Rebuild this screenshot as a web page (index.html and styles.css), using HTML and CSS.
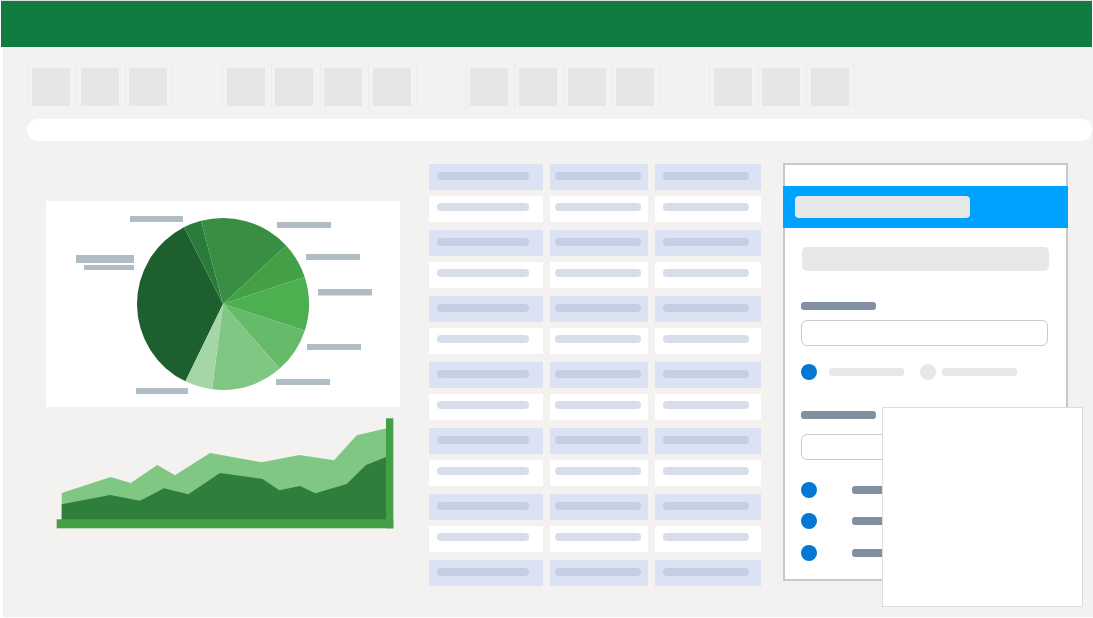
FILE: index.html
```html
<!DOCTYPE html>
<html>
<head>
<meta charset="utf-8">
<link rel="stylesheet" href="styles.css">
</head>
<body>
<header class="titlebar"></header>
<main class="workspace">
  <div class="toolbar">
    <div class="tool-group">
      <div class="tool"><span class="tool-icon"></span></div>
      <div class="tool"><span class="tool-icon"></span></div>
      <div class="tool"><span class="tool-icon"></span></div>
    </div>
    <div class="tool-group">
      <div class="tool"><span class="tool-icon"></span></div>
      <div class="tool"><span class="tool-icon"></span></div>
      <div class="tool"><span class="tool-icon"></span></div>
      <div class="tool"><span class="tool-icon"></span></div>
    </div>
    <div class="tool-group">
      <div class="tool"><span class="tool-icon"></span></div>
      <div class="tool"><span class="tool-icon"></span></div>
      <div class="tool"><span class="tool-icon"></span></div>
      <div class="tool"><span class="tool-icon"></span></div>
    </div>
    <div class="tool-group">
      <div class="tool"><span class="tool-icon"></span></div>
      <div class="tool"><span class="tool-icon"></span></div>
      <div class="tool"><span class="tool-icon"></span></div>
    </div>
  </div>
  <div class="searchbar"></div>
  <div class="content">
    <div class="charts">
      <div class="pie-card">
        <svg class="pie-svg" viewBox="46 201 354 206" width="354" height="206">
          <path d="M223 304 L185.44 381.37 A86 86 0 0 1 183.96 227.37 Z" fill="#1e5f2f"/>
          <path d="M223 304 L183.96 227.37 A86 86 0 0 1 201.03 220.86 Z" fill="#2b7b3b"/>
          <path d="M223 304 L201.03 220.86 A86 86 0 0 1 286.10 245.57 Z" fill="#388e43"/>
          <path d="M223 304 L286.10 245.57 A86 86 0 0 1 304.65 277.00 Z" fill="#43a047"/>
          <path d="M223 304 L304.65 277.00 A86 86 0 0 1 304.84 330.44 Z" fill="#4caf50"/>
          <path d="M223 304 L304.84 330.44 A86 86 0 0 1 279.76 368.61 Z" fill="#66bb6a"/>
          <path d="M223 304 L279.76 368.61 A86 86 0 0 1 212.07 389.30 Z" fill="#81c784"/>
          <path d="M223 304 L212.07 389.30 A86 86 0 0 1 185.44 381.37 Z" fill="#a5d6a7"/>
          <g fill="#b0bdc4">
            <rect x="130" y="216" width="53" height="6"/>
            <rect x="76" y="255" width="58" height="8"/>
            <rect x="84" y="265" width="50" height="5"/>
            <rect x="277" y="222" width="54" height="6"/>
            <rect x="306" y="254" width="54" height="6"/>
            <rect x="318" y="289" width="54" height="6.5"/>
            <rect x="307" y="344" width="54" height="6"/>
            <rect x="276" y="379" width="54" height="6"/>
            <rect x="136" y="388" width="52" height="6"/>
          </g>
        </svg>
      </div>
      <svg class="area-chart" viewBox="46 415 354 115" width="354" height="115">
        <polygon fill="#81c784" points="61.7,493 110.7,477 130.7,483 157.3,465 175,475.3 210,453 261.7,462.3 299.3,455 334,460.3 356.7,435.3 386.7,428.3 386.7,520 61.7,520"/>
        <polygon fill="#2f7e3c" points="61.7,504.3 110,495 140,500.7 164,488.3 188.3,494.3 220,473 262.7,479 279.3,490.3 300,486 315.3,493.3 346.7,484 366,465 386.7,456.7 386.7,520 61.7,520"/>
        <rect x="56.7" y="519.3" width="336.6" height="9" fill="#43a047"/>
        <rect x="386" y="418.3" width="7.3" height="110" fill="#43a047"/>
      </svg>
    </div>

    <div class="sheet">
      <div class="row head"><div class="cell c1"><span class="bar"></span></div><div class="cell c2"><span class="bar"></span></div><div class="cell c3"><span class="bar"></span></div></div>
      <div class="row body"><div class="cell c1"><span class="bar"></span></div><div class="cell c2"><span class="bar"></span></div><div class="cell c3"><span class="bar"></span></div></div>
      <div class="row head"><div class="cell c1"><span class="bar"></span></div><div class="cell c2"><span class="bar"></span></div><div class="cell c3"><span class="bar"></span></div></div>
      <div class="row body"><div class="cell c1"><span class="bar"></span></div><div class="cell c2"><span class="bar"></span></div><div class="cell c3"><span class="bar"></span></div></div>
      <div class="row head"><div class="cell c1"><span class="bar"></span></div><div class="cell c2"><span class="bar"></span></div><div class="cell c3"><span class="bar"></span></div></div>
      <div class="row body"><div class="cell c1"><span class="bar"></span></div><div class="cell c2"><span class="bar"></span></div><div class="cell c3"><span class="bar"></span></div></div>
      <div class="row head"><div class="cell c1"><span class="bar"></span></div><div class="cell c2"><span class="bar"></span></div><div class="cell c3"><span class="bar"></span></div></div>
      <div class="row body"><div class="cell c1"><span class="bar"></span></div><div class="cell c2"><span class="bar"></span></div><div class="cell c3"><span class="bar"></span></div></div>
      <div class="row head"><div class="cell c1"><span class="bar"></span></div><div class="cell c2"><span class="bar"></span></div><div class="cell c3"><span class="bar"></span></div></div>
      <div class="row body"><div class="cell c1"><span class="bar"></span></div><div class="cell c2"><span class="bar"></span></div><div class="cell c3"><span class="bar"></span></div></div>
      <div class="row head"><div class="cell c1"><span class="bar"></span></div><div class="cell c2"><span class="bar"></span></div><div class="cell c3"><span class="bar"></span></div></div>
      <div class="row body"><div class="cell c1"><span class="bar"></span></div><div class="cell c2"><span class="bar"></span></div><div class="cell c3"><span class="bar"></span></div></div>
      <div class="row head"><div class="cell c1"><span class="bar"></span></div><div class="cell c2"><span class="bar"></span></div><div class="cell c3"><span class="bar"></span></div></div>
    </div>

    <div class="panel">
      <div class="panel-top"></div>
      <div class="panel-header"><span class="header-pill"></span></div>
      <div class="panel-body">
        <div class="wide-field"></div>
        <div class="field-label first"></div>
        <div class="field-input first"></div>
        <div class="radio-row">
          <span class="dot on"></span><span class="option-text"></span>
          <span class="dot off"></span><span class="option-text short"></span>
        </div>
        <div class="field-label second"></div>
        <div class="field-input second"></div>
        <div class="option-list">
          <div class="option"><span class="dot on"></span><span class="option-line"></span></div>
          <div class="option"><span class="dot on"></span><span class="option-line"></span></div>
          <div class="option"><span class="dot on"></span><span class="option-line"></span></div>
        </div>
      </div>
      <div class="popover"></div>
    </div>
  </div>
</main>
</body>
</html>
```

FILE: styles.css
```css
* { box-sizing: border-box; }

html, body {
  margin: 0;
  padding: 0;
  background: #ffffff;
  font-family: "Liberation Sans", Arial, sans-serif;
  overflow: hidden;
}

body {
  width: 1093px;
  height: 618px;
  border-top: 1px solid #dcdcdc;
}

.titlebar {
  height: 46px;
  margin: 0 1px 0 1px;
  background: #107c41;
}

.workspace {
  margin-left: 3px;
  height: 570px;
  background: #f3f2f1;
  padding-left: 24.4px;
  padding-top: 11.7px;
}

/* toolbar */
.toolbar {
  display: flex;
  gap: 48.7px;
  height: 50px;
}

.tool-group {
  display: flex;
}

.tool {
  width: 48.7px;
  height: 50px;
  border-left: 1px solid #edecea;
  padding: 9.3px 0 0 3.6px;
}

.tool:last-child {
  border-right: 1px solid #edecea;
}

.tool-icon {
  display: block;
  width: 38px;
  height: 38px;
  background: #e5e6e8;
}

.searchbar {
  margin-top: 10.3px;
  margin-right: 1px;
  height: 22px;
  background: #ffffff;
  border-radius: 11px;
}

/* content */
.content {
  display: flex;
  align-items: flex-start;
  margin-top: 22px;
}

.charts {
  margin-left: 18.6px;
  width: 354px;
  padding-top: 38px;
}

.pie-card {
  width: 354px;
  height: 206px;
  background: #ffffff;
}

.pie-svg, .area-chart {
  display: block;
}

.area-chart {
  margin-top: 8px;
}

/* sheet */
.sheet {
  margin-left: 29px;
  margin-top: 1px;
  display: flex;
  flex-direction: column;
}

.row {
  display: flex;
  gap: 7px;
  height: 26px;
}

.row.head + .row.body { margin-top: 6px; }
.row.body + .row.head { margin-top: 8px; }

.cell { height: 26px; }
.cell.c1 { width: 114px; }
.cell.c2 { width: 98px; }
.cell.c3 { width: 106px; }

.row.head .cell { background: #dbe2f3; padding-top: 8px; }
.row.body .cell { background: #ffffff; padding-top: 7px; }

.bar {
  display: block;
  height: 8px;
  border-radius: 4px;
}

.row.head .bar { background: #c4cfe6; }
.row.body .bar { background: #d7dee9; }

.c1 .bar { margin-left: 8px; width: 92px; }
.c2 .bar { margin-left: 5px; width: 86px; }
.c3 .bar { margin-left: 8px; width: 86px; }

/* panel */
.panel {
  position: relative;
  margin-left: 22px;
  width: 285px;
  height: 418px;
  background: #ffffff;
  border: 2px solid #c8c8c8;
}

.panel-top { height: 21px; }

.panel-header {
  margin: 0 -2px;
  height: 42px;
  background: #00a2ff;
  padding: 10px 0 0 12px;
}

.header-pill {
  display: block;
  width: 175px;
  height: 22px;
  background: #e6e7e9;
  border-radius: 4px;
}

.panel-body {
  padding: 0 17px 0 16px;
}

.wide-field {
  margin-top: 19px;
  margin-left: 1px;
  width: 247px;
  height: 24px;
  background: #e6e7e8;
  border-radius: 5px;
}

.field-label {
  width: 75px;
  height: 8px;
  background: #8290a3;
  border-radius: 3px;
}

.field-label.first { margin-top: 31px; }
.field-label.second { margin-top: 31px; }

.field-input {
  width: 247px;
  height: 26px;
  border: 1px solid #c6cbd3;
  border-radius: 6px;
  background: #ffffff;
}

.field-input.first { margin-top: 10px; }
.field-input.second { margin-top: 15px; }

.radio-row {
  margin-top: 18px;
  display: flex;
  align-items: center;
  height: 16px;
}

.dot {
  display: block;
  width: 16px;
  height: 16px;
  border-radius: 50%;
  flex: none;
}

.dot.on { background: #0078d4; }
.dot.off { background: #e6e7e9; margin-left: 16px; }

.option-text {
  display: block;
  margin-left: 12px;
  width: 75px;
  height: 8px;
  border-radius: 3px;
  background: #e6e7e9;
}

.option-text.short { margin-left: 6px; }

.option-list {
  margin-top: 22px;
  display: flex;
  flex-direction: column;
  gap: 15.5px;
}

.option {
  display: flex;
  align-items: center;
  height: 16px;
}

.option-line {
  display: block;
  margin-left: 35px;
  width: 60px;
  height: 8px;
  border-radius: 3px;
  background: #8290a3;
}

.popover {
  position: absolute;
  left: 97px;
  top: 242px;
  width: 201px;
  height: 200px;
  background: #ffffff;
  border: 1px solid #dcdcdc;
}
```
